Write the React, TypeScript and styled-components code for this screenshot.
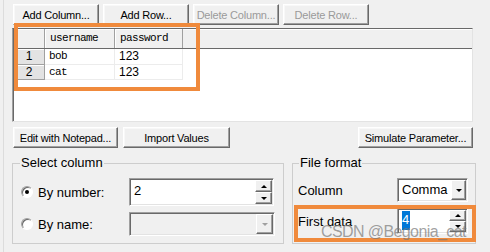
import React from 'react';
import styled, { createGlobalStyle } from 'styled-components';

const GlobalStyle = createGlobalStyle`
  html, body {
    margin: 0;
    padding: 0;
    background: #f0f0f0;
  }
  body {
    font-family: "Liberation Sans", Arial, sans-serif;
    color: #000;
  }
`;

const Window = styled.div`
  position: relative;
  width: 487px;
  height: 252px;
  margin-left: 3px;
  box-sizing: border-box;
  border-left: 1px solid #dcdcdc;
  padding: 4px 0 0 8px;
  display: flex;
  flex-direction: column;
  overflow: hidden;
`;

const Toolbar = styled.div`
  display: flex;
  gap: 4px;
  padding-left: 1px;
  height: 21px;
`;

const Button = styled.button<{ $w: number; $off?: boolean; $push?: boolean }>`
  width: ${p => p.$w}px;
  height: 21px;
  box-sizing: border-box;
  padding: 0;
  margin-left: ${p => (p.$push ? 'auto' : '0')};
  background: #f0f0f0;
  border: 1px solid;
  border-color: #fff #696969 #696969 #fff;
  box-shadow: inset -1px -1px 0 #a0a0a0, inset 1px 1px 0 #f8f8f8;
  font-family: "Liberation Sans", Arial, sans-serif;
  font-size: 11px;
  letter-spacing: -0.2px;
  color: ${p => (p.$off ? '#9a9a9a' : '#000')};
`;

const Grid = styled.div`
  margin-top: 3px;
  width: 461px;
  height: 94px;
  box-sizing: border-box;
  background: #fff;
  border-top: 1px solid #696969;
  border-left: 1px solid #a0a0a0;
  border-right: 1px solid #e3e3e3;
  border-bottom: 1px solid #e3e3e3;
  padding-left: 1px;
  box-shadow: inset 1px 0 0 #696969;
`;

const HeaderRow = styled.div`
  display: flex;
  height: 20px;
  box-sizing: border-box;
  background: #f0f0f0;
  border-bottom: 1px solid #696969;
  box-shadow: inset 0 1px 0 #fff;
`;

const HeaderCell = styled.div<{ $w: number }>`
  width: ${p => p.$w}px;
  box-sizing: border-box;
  border-right: 1px solid #a0a0a0;
  box-shadow: inset 1px 1px 0 #fff;
  padding-left: 5px;
  font-family: "Liberation Mono", monospace;
  font-size: 11px;
  letter-spacing: -0.6px;
  line-height: 19px;
`;

const DataRow = styled.div<{ $h: number }>`
  display: flex;
  height: ${p => p.$h}px;
`;

const RowHead = styled.div`
  width: 31px;
  box-sizing: border-box;
  background: #e3e3e3;
  border-right: 1px solid #a0a0a0;
  border-bottom: 1px solid #a0a0a0;
  box-shadow: inset 1px 1px 0 #fff;
  text-align: center;
  font-size: 12px;
  line-height: 15px;
`;

const Cell = styled.div<{ $w: number; $mono?: boolean }>`
  width: ${p => p.$w}px;
  box-sizing: border-box;
  border-right: 1px solid #ececec;
  border-bottom: 1px solid #ececec;
  padding-left: 4px;
  font-family: ${p => (p.$mono ? '"Liberation Mono", monospace' : '"Liberation Sans", Arial, sans-serif')};
  font-size: ${p => (p.$mono ? '11px' : '12px')};
  letter-spacing: ${p => (p.$mono ? '-0.6px' : '0')};
  line-height: 15px;
`;

const ActionRow = styled.div`
  display: flex;
  gap: 5px;
  width: 461px;
  margin-top: 5px;
  padding-left: 1px;
  box-sizing: border-box;
`;

const Groups = styled.div`
  display: flex;
  gap: 8px;
  width: 464px;
  margin-top: 7px;
`;

const Group = styled.fieldset<{ $w: number }>`
  width: ${p => p.$w}px;
  height: 89px;
  box-sizing: border-box;
  margin: 0;
  padding: 0;
  min-width: 0;
  border: 1px solid #cdcdcd;
`;

const Legend = styled.legend<{ $off: number }>`
  margin-left: ${p => p.$off}px;
  padding: 0 1px;
  font-size: 13px;
  line-height: 16px;
`;

const GroupBody = styled.div<{ $pad: number }>`
  display: flex;
  flex-direction: column;
  gap: 6px;
  padding: 7px 0 0 ${p => p.$pad}px;
`;

const Row = styled.div<{ $h: number }>`
  display: flex;
  align-items: center;
  height: ${p => p.$h}px;
`;

const Radio = styled.span<{ $on?: boolean }>`
  position: relative;
  width: 12px;
  height: 12px;
  box-sizing: border-box;
  border-radius: 50%;
  border: 1px solid;
  border-color: #a0a0a0 #fff #fff #a0a0a0;
  box-shadow: inset 1px 1px 0 #696969;
  background: #fff;
  &::after {
    content: '';
    display: ${p => (p.$on ? 'block' : 'none')};
    position: absolute;
    left: 3px;
    top: 3px;
    width: 4px;
    height: 4px;
    border-radius: 50%;
    background: #000;
  }
`;

const Label = styled.span<{ $w: number; $gap?: number }>`
  width: ${p => p.$w}px;
  margin-left: ${p => p.$gap ?? 0}px;
  font-size: 13px;
`;

const Field = styled.div<{ $w: number; $h: number; $off?: boolean }>`
  display: flex;
  width: ${p => p.$w}px;
  height: ${p => p.$h}px;
  box-sizing: border-box;
  border: 1px solid;
  border-color: #a0a0a0 #fff #fff #a0a0a0;
  box-shadow: inset 1px 1px 0 #696969, inset -1px -1px 0 #e3e3e3;
  padding: 1px 1px 1px 1px;
  background: ${p => (p.$off ? '#f0f0f0' : '#fff')};
`;

const FieldText = styled.div<{ $top: number }>`
  flex: 1;
  padding: ${p => p.$top}px 0 0 3px;
  font-size: 13px;
  line-height: 16px;
`;

const Spinner = styled.div`
  display: flex;
  flex-direction: column;
  width: 17px;
`;

const SmallButton = styled.div`
  flex: 1;
  display: flex;
  align-items: center;
  justify-content: center;
  box-sizing: border-box;
  background: #f0f0f0;
  border: 1px solid;
  border-color: #fff #696969 #696969 #fff;
  box-shadow: inset -1px -1px 0 #a0a0a0;
`;

const Arrow = styled.span<{ $up?: boolean; $off?: boolean }>`
  width: 0;
  height: 0;
  border-left: 3px solid transparent;
  border-right: 3px solid transparent;
  ${p => (p.$up ? 'border-bottom' : 'border-top')}: 3px solid ${p => (p.$off ? '#a0a0a0' : '#000')};
`;

const DropButton = styled(SmallButton)<{ $w: number }>`
  flex: 0 0 ${p => p.$w}px;
`;

const Selected = styled.span`
  display: inline-block;
  background: #0078d7;
  color: #fff;
  padding: 1px 1px 2px 0;
`;

const Mark = styled.div<{ $x: number; $y: number; $w: number; $h: number }>`
  position: absolute;
  left: ${p => p.$x}px;
  top: ${p => p.$y}px;
  width: ${p => p.$w}px;
  height: ${p => p.$h}px;
  box-sizing: border-box;
  border: 4px solid #f08a3c;
  pointer-events: none;
`;

const Watermark = styled.div`
  position: absolute;
  left: 317px;
  top: 224px;
  font-size: 16px;
  line-height: 16px;
  letter-spacing: -0.6px;
  color: rgba(120, 120, 120, 0.7);
  white-space: nowrap;
  pointer-events: none;
`;

const rows = [
  { n: 1, user: 'bob', pass: '123', h: 16 },
  { n: 2, user: 'cat', pass: '123', h: 15 },
];

function SpinField({ w, h, top, children }: { w: number; h: number; top: number; children: React.ReactNode }) {
  return (
    <Field $w={w} $h={h}>
      <FieldText $top={top}>{children}</FieldText>
      <Spinner>
        <SmallButton><Arrow $up /></SmallButton>
        <SmallButton><Arrow /></SmallButton>
      </Spinner>
    </Field>
  );
}

export default function App() {
  return (
    <Window>
      <GlobalStyle />
      <Toolbar>
        <Button $w={86}>Add Column...</Button>
        <Button $w={86}>Add Row...</Button>
        <Button $w={86} $off>Delete Column...</Button>
        <Button $w={86} $off>Delete Row...</Button>
      </Toolbar>

      <Grid>
        <HeaderRow>
          <HeaderCell $w={31} />
          <HeaderCell $w={70}>username</HeaderCell>
          <HeaderCell $w={68}>password</HeaderCell>
        </HeaderRow>
        {rows.map(r => (
          <DataRow key={r.n} $h={r.h}>
            <RowHead>{r.n}</RowHead>
            <Cell $w={70} $mono>{r.user}</Cell>
            <Cell $w={68}>{r.pass}</Cell>
          </DataRow>
        ))}
      </Grid>

      <ActionRow>
        <Button $w={105}>Edit with Notepad...</Button>
        <Button $w={107}>Import Values</Button>
        <Button $w={115} $push>Simulate Parameter...</Button>
      </ActionRow>

      <Groups>
        <Group $w={272}>
          <Legend $off={7}>Select column</Legend>
          <GroupBody $pad={8}>
            <Row $h={28}>
              <Radio $on />
              <Label $w={91} $gap={5}>By number:</Label>
              <SpinField w={145} h={28} top={3}>2</SpinField>
            </Row>
            <Row $h={24}>
              <Radio />
              <Label $w={91} $gap={5}>By name:</Label>
              <Field $w={146} $h={24} $off>
                <FieldText $top={2} />
                <DropButton $w={17}><Arrow $off /></DropButton>
              </Field>
            </Row>
          </GroupBody>
        </Group>

        <Group $w={184}>
          <Legend $off={6}>File format</Legend>
          <GroupBody $pad={5}>
            <Row $h={24}>
              <Label $w={99}>Column</Label>
              <Field $w={71} $h={24}>
                <FieldText $top={2}>Comma</FieldText>
                <DropButton $w={15}><Arrow /></DropButton>
              </Field>
            </Row>
            <Row $h={26}>
              <Label $w={99}>First data</Label>
              <SpinField w={71} h={26} top={1}><Selected>4</Selected></SpinField>
            </Row>
          </GroupBody>
        </Group>
      </Groups>

      <Mark $x={10} $y={23} $w={186} $h={68} />
      <Mark $x={290} $y={205} $w={182} $h={37} />
      <Watermark>CSDN @Begonia_cat</Watermark>
    </Window>
  );
}
